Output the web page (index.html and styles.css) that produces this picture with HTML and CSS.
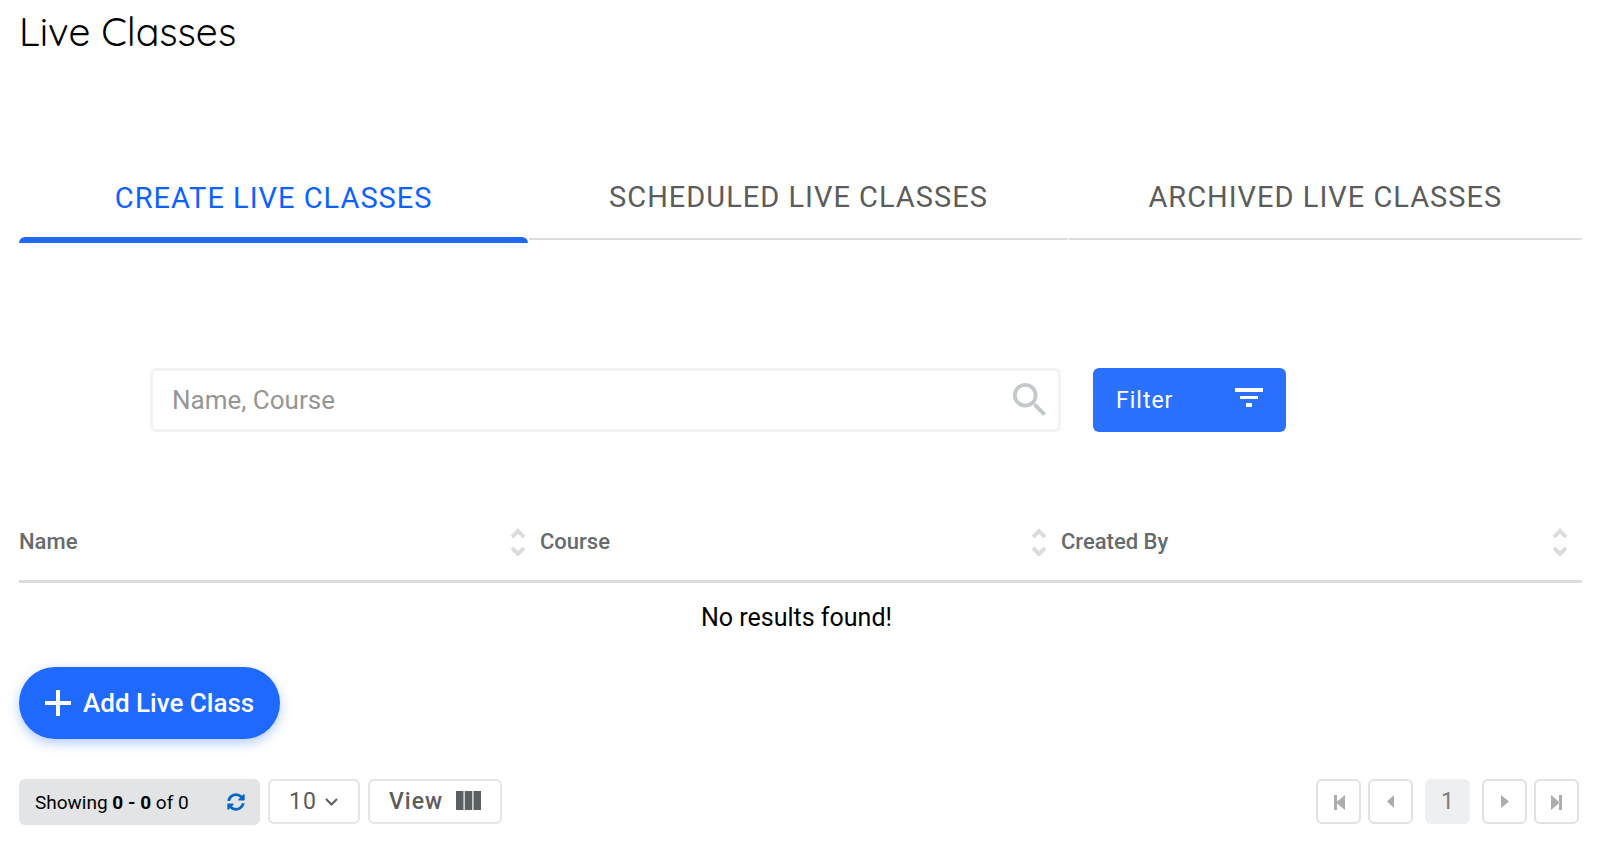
FILE: index.html
```html
<!DOCTYPE html>
<html lang="en">
<head>
    <meta charset="UTF-8">
    <meta name="viewport" content="width=device-width, initial-scale=1.0">
    <title>Live Classes</title>
    <link rel="stylesheet" href="styles.css">
</head>
<body>
    <div class="container">
        <h1>Live Classes</h1>

        <div class="tabs" role="tablist">
            <button class="tab active" type="button" role="tab" aria-selected="true">CREATE LIVE CLASSES</button>
            <button class="tab" type="button" role="tab" aria-selected="false">SCHEDULED LIVE CLASSES</button>
            <button class="tab" type="button" role="tab" aria-selected="false">ARCHIVED LIVE CLASSES</button>
        </div>

        <div class="search-row">
            <label class="search-box">
                <input type="text" placeholder="Name, Course" aria-label="Search by name or course">
                <svg class="search-icon" viewBox="3 3 18 18"><path d="M15.5 14h-.79l-.28-.27A6.47 6.47 0 0 0 16 9.5 6.5 6.5 0 1 0 9.5 16c1.61 0 3.09-.59 4.23-1.57l.27.28v.79l5 4.99L20.49 19l-4.99-5zm-6 0a4.5 4.5 0 1 1 0-9 4.5 4.5 0 0 1 0 9z"/></svg>
            </label>
            <button class="filter-btn" type="button">
                Filter
                <svg class="filter-icon" viewBox="0 0 28 19"><path d="M0 0h28v4H0zM5 8h18v3H5zM11 15h6v4h-6z"/></svg>
            </button>
        </div>

        <table class="class-table">
            <thead>
                <tr>
                    <th><div class="head-cell">Name <svg class="sort-icon" viewBox="0 0 14 28"><path d="M1 9l6-6 6 6M1 20l6 6 6-6"/></svg></div></th>
                    <th><div class="head-cell">Course <svg class="sort-icon" viewBox="0 0 14 28"><path d="M1 9l6-6 6 6M1 20l6 6 6-6"/></svg></div></th>
                    <th><div class="head-cell">Created By <svg class="sort-icon" viewBox="0 0 14 28"><path d="M1 9l6-6 6 6M1 20l6 6 6-6"/></svg></div></th>
                </tr>
            </thead>
            <tbody>
                <tr>
                    <td class="empty" colspan="3">No results found!</td>
                </tr>
            </tbody>
        </table>

        <button class="add-btn" type="button">
            <svg class="plus-icon" viewBox="0 0 26 26"><path d="M13 0v26M0 13h26"/></svg>
            Add Live Class
        </button>

        <div class="footer">
            <div class="showing">
                <span>Showing <b>0 - 0</b> of 0</span>
                <button class="refresh-btn" type="button" aria-label="Refresh">
                    <svg viewBox="0 0 512 512"><path d="M370.72 133.28C339.458 104.008 298.888 87.962 255.848 88c-77.458.068-144.328 53.178-162.791 126.85-1.344 5.363-6.122 9.15-11.651 9.15H24.103c-7.498 0-13.194-6.807-11.807-14.176C33.933 94.924 134.813 8 256 8c66.448 0 126.791 26.136 171.315 68.685L463.03 40.97C478.149 25.851 504 36.559 504 57.941V192c0 13.255-10.745 24-24 24H345.941c-21.382 0-32.09-25.851-16.971-40.971l41.75-41.749zM32 296h134.059c21.382 0 32.09 25.851 16.971 40.971l-41.75 41.75c31.262 29.273 71.835 45.319 114.876 45.28 77.418-.07 144.315-53.144 162.787-126.849 1.344-5.363 6.122-9.15 11.651-9.15h57.304c7.498 0 13.194 6.807 11.807 14.176C478.067 417.076 377.187 504 256 504c-66.448 0-126.791-26.136-171.315-68.685L48.97 471.03C33.851 486.149 8 475.441 8 454.059V320c0-13.255 10.745-24 24-24z"/></svg>
                </button>
            </div>
            <div class="page-size">
                <select aria-label="Rows per page">
                    <option>10</option>
                    <option>25</option>
                    <option>50</option>
                </select>
                <svg class="chevron" viewBox="0 0 13 8"><path d="M1 1l5.5 5.5L12 1"/></svg>
            </div>
            <button class="view-btn" type="button">
                View
                <svg class="columns-icon" viewBox="0 0 25 19"><path d="M0 0h7.500v19H0zM8.700 0h7.600v19H8.700zM17.500 0H25v19h-7.500z"/></svg>
            </button>

            <div class="pager">
                <button class="page-btn" type="button" aria-label="First page"><svg viewBox="0 0 16 16"><path d="M3 1h3v15H3zM14 1v15L5 8.500z"/></svg></button>
                <button class="page-btn" type="button" aria-label="Previous page"><svg viewBox="0 0 16 16"><path d="M11 1v13L4 7.500z"/></svg></button>
                <button class="page-btn current" type="button">1</button>
                <button class="page-btn" type="button" aria-label="Next page"><svg viewBox="0 0 16 16"><path d="M4 1v13l8-6.500z"/></svg></button>
                <button class="page-btn" type="button" aria-label="Last page"><svg viewBox="0 0 16 16"><path d="M10 1h3v15h-3zM2 1v15l9-7.500z"/></svg></button>
            </div>
        </div>
    </div>
</body>
</html>
```
FILE: styles.css
```css
* {
    box-sizing: border-box;
}
body {
    margin: 0;
    background-color: #fff;
    color: #000;
    font-family: Roboto, sans-serif;
}
button, input, select {
    margin: 0;
    padding: 0;
    border: none;
    background: none;
    font-family: inherit;
}
button, select {
    cursor: pointer;
}
svg {
    display: block;
    flex-shrink: 0;
}
.container {
    padding: 8px 18px 20px 19px;
}
h1 {
    margin: 0 0 100px;
    font-family: Quicksand, "Open Sans", sans-serif;
    font-size: 39px;
    font-weight: 400;
    line-height: 48px;
}

/* Tabs */
.tabs {
    display: grid;
    grid-template-columns: 509fr 538fr 513fr;
    column-gap: 1px;
    align-items: start;
    height: 87px;
}
.tab {
    height: 84px;
    border-bottom: 2px solid #dcdcdc;
    color: #5c5c5c;
    font-size: 29px;
    letter-spacing: 1px;
}
.tab.active {
    height: 87px;
    padding-bottom: 4px;
    border: none;
    color: #0d62ff;
    position: relative;
}
.tab.active::after {
    content: "";
    position: absolute;
    left: 0;
    right: 0;
    bottom: 0;
    height: 6px;
    border-radius: 6px 6px 0 0;
    background-color: #1f69ff;
}

/* Search and filter */
.search-row {
    display: flex;
    gap: 32px;
    margin: 125px 296px 0 131px;
}
.search-box {
    display: flex;
    align-items: center;
    flex: 1;
    height: 64px;
    padding: 0 11px 0 19px;
    border: 3px solid #f1f3f4;
    border-radius: 6px;
}
.search-box input {
    flex: 1;
    min-width: 0;
    outline: none;
    font-size: 26px;
}
.search-box input::placeholder {
    color: #969696;
}
.search-icon {
    width: 34px;
    height: 34px;
    fill: #c3c8cb;
}
.filter-btn {
    display: flex;
    justify-content: space-between;
    align-items: center;
    width: 193px;
    height: 64px;
    padding: 0 23px;
    border-radius: 6px;
    background-color: #2b71ff;
    color: #fff;
    font-size: 23px;
    letter-spacing: 1px;
}
.filter-icon {
    width: 28px;
    height: 19px;
    margin-bottom: 6px;
    fill: #fff;
}

/* Table */
.class-table {
    width: 100%;
    margin-top: 72px;
    border-collapse: collapse;
    table-layout: fixed;
}
.class-table th {
    height: 77px;
    padding: 0 15px 0 0;
    border-bottom: 3px solid #dcdcdc;
    color: #666b6e;
    font-size: 22px;
    font-weight: 500;
    text-align: left;
}
.head-cell {
    display: flex;
    justify-content: space-between;
    align-items: center;
}
.sort-icon {
    width: 14px;
    height: 28px;
    fill: none;
    stroke: #dcdcdc;
    stroke-width: 4;
}
.class-table .empty {
    height: 72px;
    padding: 0 8px 0 0;
    font-size: 25px;
    text-align: center;
}

/* Add button */
.add-btn {
    display: flex;
    align-items: center;
    gap: 12px;
    height: 72px;
    margin-top: 14px;
    padding: 0 26px;
    border-radius: 36px;
    background-color: #1f69ff;
    box-shadow: 0 4px 12px rgba(31, 105, 255, 0.35);
    color: #fff;
    font-size: 26px;
    font-weight: 500;
}
.plus-icon {
    width: 26px;
    height: 26px;
    stroke: #fff;
    stroke-width: 4;
}

/* Footer */
.footer {
    display: flex;
    align-items: flex-start;
    gap: 8px;
    margin-top: 40px;
}
.showing {
    display: flex;
    justify-content: space-between;
    align-items: center;
    width: 241px;
    height: 46px;
    padding: 0 15px 0 16px;
    border-radius: 6px;
    background-color: #e2e4e5;
    font-size: 19px;
}
.refresh-btn svg {
    width: 18px;
    height: 18px;
    fill: #0b66c8;
}
.page-size {
    display: grid;
    align-items: center;
    width: 92px;
    height: 45px;
}
.page-size select {
    grid-area: 1 / 1;
    width: 100%;
    height: 100%;
    padding-left: 19px;
    border: 2px solid #e3e5e6;
    border-radius: 6px;
    appearance: none;
    color: #5c5c5c;
    font-size: 23px;
    letter-spacing: 1px;
}
.chevron {
    grid-area: 1 / 1;
    justify-self: end;
    width: 13px;
    height: 8px;
    margin-right: 22px;
    fill: none;
    stroke: #5c5c5c;
    stroke-width: 2;
    pointer-events: none;
}
.view-btn {
    display: flex;
    justify-content: space-between;
    align-items: center;
    width: 134px;
    height: 45px;
    padding: 0 19px;
    border: 2px solid #e3e5e6;
    border-radius: 6px;
    color: #5c5c5c;
    font-size: 23px;
    font-weight: 500;
    letter-spacing: 1px;
}
.columns-icon {
    width: 25px;
    height: 19px;
    margin-bottom: 3px;
    fill: #5b6063;
}
.pager {
    display: flex;
    gap: 7px;
    margin-left: auto;
    margin-right: 3px;
}
.page-btn {
    display: flex;
    justify-content: center;
    align-items: center;
    width: 45px;
    height: 45px;
    border: 2px solid #e0e3e3;
    border-radius: 6px;
}
.page-btn svg {
    width: 16px;
    height: 16px;
    fill: #acacac;
}
.page-btn.current {
    margin: 0 5px;
    border: none;
    background-color: #edeff0;
    color: #7d7d7d;
    font-size: 23px;
}
```
